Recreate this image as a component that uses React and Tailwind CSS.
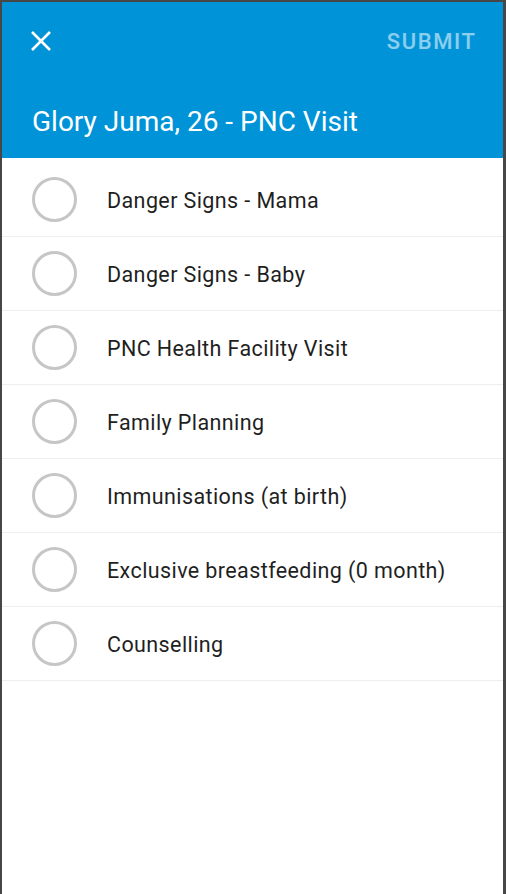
import React from "react";

const items = [
  "Danger Signs - Mama",
  "Danger Signs - Baby",
  "PNC Health Facility Visit",
  "Family Planning",
  "Immunisations (at birth)",
  "Exclusive breastfeeding (0 month)",
  "Counselling",
];

export default function App() {
  return (
    <div
      className="w-[506px] h-[894px] bg-[#474747] pt-[2px] pl-[2px] pr-[3px] overflow-hidden"
      style={{ fontFamily: "Roboto, 'Liberation Sans', sans-serif" }}
    >
      <div className="bg-white h-full flex flex-col">
        <div className="bg-[#0093d7] h-[156px] flex flex-col">
          <div className="flex items-center justify-between h-[78px] pl-[27px] pr-[28px]">
            <svg width="24" height="24" viewBox="0 0 24 24" className="text-white">
              <path d="M3 3 L21 21 M21 3 L3 21" stroke="currentColor" strokeWidth="2.6" fill="none" />
            </svg>
            <span className="text-[22px] font-medium text-white/55 tracking-[1.6px] mr-[-1.6px]">SUBMIT</span>
          </div>
          <div className="pl-[30px] pt-[28px] text-[28px] text-white leading-none">
            Glory Juma, 26 - PNC Visit
          </div>
        </div>
        <div className="pt-[5px]">
          {items.map((t) => (
            <div key={t} className="flex items-center h-[74px] border-b border-[#eeeeee] pl-[30px]">
              <div className="w-[45px] h-[45px] rounded-full border-[3px] border-[#c6c6c6] shrink-0" />
              <span className="ml-[30px] pt-[4px] text-[21.5px] tracking-[0.4px] text-[#1f1f1f]">{t}</span>
            </div>
          ))}
        </div>
      </div>
    </div>
  );
}
